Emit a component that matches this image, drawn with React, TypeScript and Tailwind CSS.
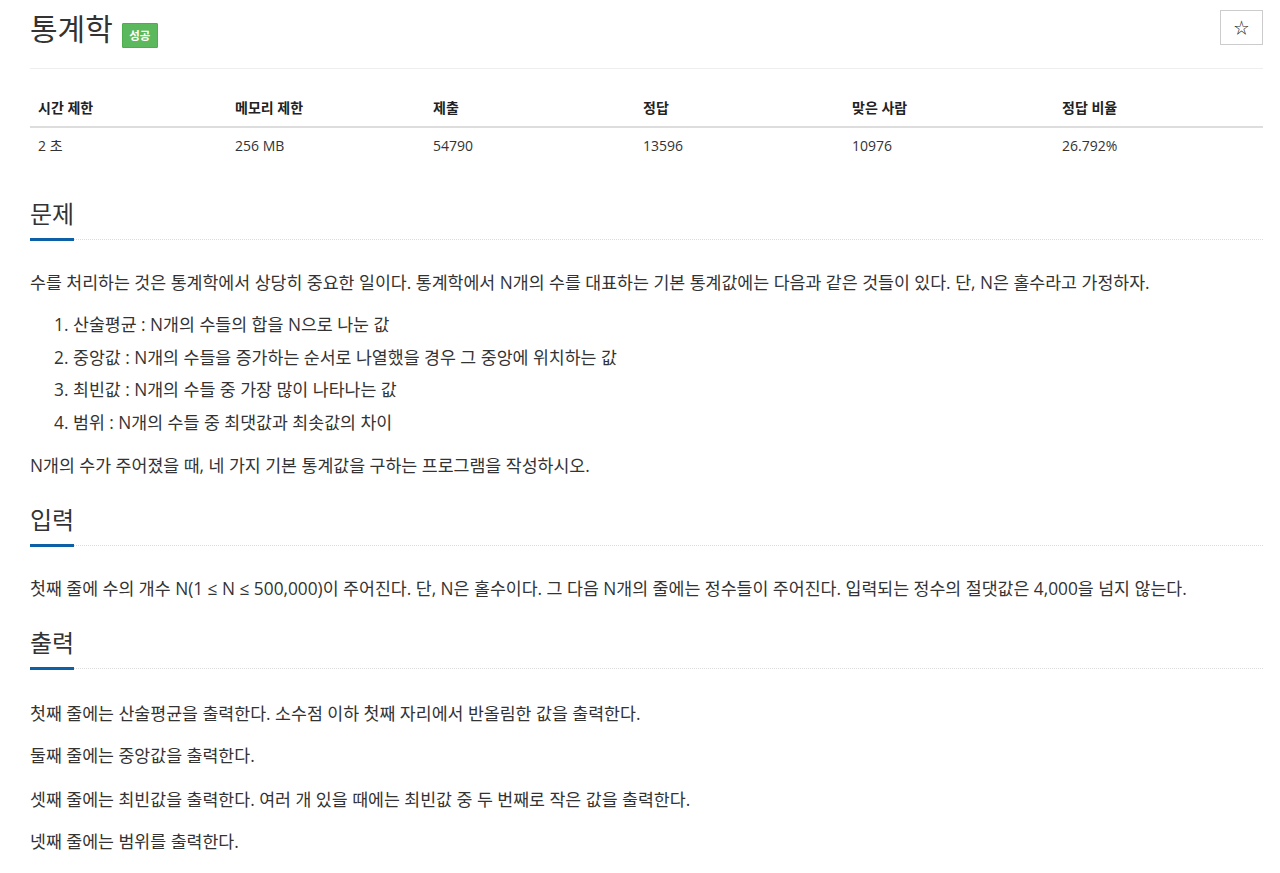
import React from "react";

const font = "font-['Open_Sans','Noto_Sans_CJK_KR',sans-serif]";

function SectionHead({ title }: { title: string }) {
  return (
    <div className="flex items-end">
      <div className="border-b-[3px] border-[#0d5fa6] pb-[8px] text-[24px] leading-[33px] text-[#333]">
        {title}
      </div>
      <div className="flex-1 border-b border-dotted border-[#dcdcdc] mb-[1px]" />
    </div>
  );
}

export default function App() {
  const heads = ["시간 제한", "메모리 제한", "제출", "정답", "맞은 사람", "정답 비율"];
  const vals = ["2 초", "256 MB", "54790", "13596", "10976", "26.792%"];
  const widths = ["w-[197px]", "w-[198px]", "w-[210px]", "w-[209px]", "w-[210px]", "w-[209px]"];
  return (
    <div className={`${font} bg-white min-h-[873px] text-[#333]`}>
      <div className="ml-[30px] w-[1233px]">
        <div className="flex items-start justify-between pt-[10px] pb-[20px] border-b border-[#eee]">
          <div className="flex items-start gap-[9px] pt-[1px]">
            <span className="text-[30px] leading-[35px] text-[#333]">통계학</span>
            <span className="mt-[12px] inline-flex h-[25px] w-[36px] items-center justify-center rounded-[1px] border border-[#4cae4c] bg-[#5cb85c] text-[11.5px] font-bold text-white">
              성공
            </span>
          </div>
          <button className="flex h-[35px] w-[43px] items-center justify-center border border-[#ccc] bg-white text-[15px] text-[#222]">
            ☆
          </button>
        </div>

        <table className="mt-[21px] w-full border-collapse text-[14px]">
          <thead>
            <tr>
              {heads.map((h, i) => (
                <th key={h} className={`${widths[i]} border-b-2 border-[#ddd] px-[8px] py-[8px] text-left font-bold leading-[20px] text-[#222]`}>
                  {h}
                </th>
              ))}
            </tr>
          </thead>
          <tbody>
            <tr>
              {vals.map((v) => (
                <td key={v} className="px-[8px] py-[8px] leading-[20px] text-[#333]">
                  {v}
                </td>
              ))}
            </tr>
          </tbody>
        </table>

        <div className="mt-[33px]">
          <SectionHead title="문제" />
          <div className="text-[17.3px] leading-[24px]">
            <p className="mt-[30px]">
              수를 처리하는 것은 통계학에서 상당히 중요한 일이다. 통계학에서 N개의 수를 대표하는 기본 통계값에는 다음과 같은 것들이 있다. 단, N은 홀수라고 가정하자.
            </p>
            <ol className="mt-[18px] list-decimal pl-[43px]">
              <li className="h-[32.5px]">산술평균 : N개의 수들의 합을 N으로 나눈 값</li>
              <li className="h-[32.5px]">중앙값 : N개의 수들을 증가하는 순서로 나열했을 경우 그 중앙에 위치하는 값</li>
              <li className="h-[32.5px]">최빈값 : N개의 수들 중 가장 많이 나타나는 값</li>
              <li className="h-[32.5px]">범위 : N개의 수들 중 최댓값과 최솟값의 차이</li>
            </ol>
            <p className="mt-[11px]">N개의 수가 주어졌을 때, 네 가지 기본 통계값을 구하는 프로그램을 작성하시오.</p>
          </div>
        </div>

        <div className="mt-[25px]">
          <SectionHead title="입력" />
          <p className="mt-[30px] text-[17.3px] leading-[24px]">
            첫째 줄에 수의 개수 N(1 ≤ N ≤ 500,000)이 주어진다. 단, N은 홀수이다. 그 다음 N개의 줄에는 정수들이 주어진다. 입력되는 정수의 절댓값은 4,000을 넘지 않는다.
          </p>
        </div>

        <div className="mt-[25px]">
          <SectionHead title="출력" />
          <div className="text-[17.3px] leading-[24px]">
            <p className="mt-[32px]">첫째 줄에는 산술평균을 출력한다. 소수점 이하 첫째 자리에서 반올림한 값을 출력한다.</p>
            <p className="mt-[18px]">둘째 줄에는 중앙값을 출력한다.</p>
            <p className="mt-[20px]">셋째 줄에는 최빈값을 출력한다. 여러 개 있을 때에는 최빈값 중 두 번째로 작은 값을 출력한다.</p>
            <p className="mt-[18px]">넷째 줄에는 범위를 출력한다.</p>
          </div>
        </div>
      </div>
    </div>
  );
}
